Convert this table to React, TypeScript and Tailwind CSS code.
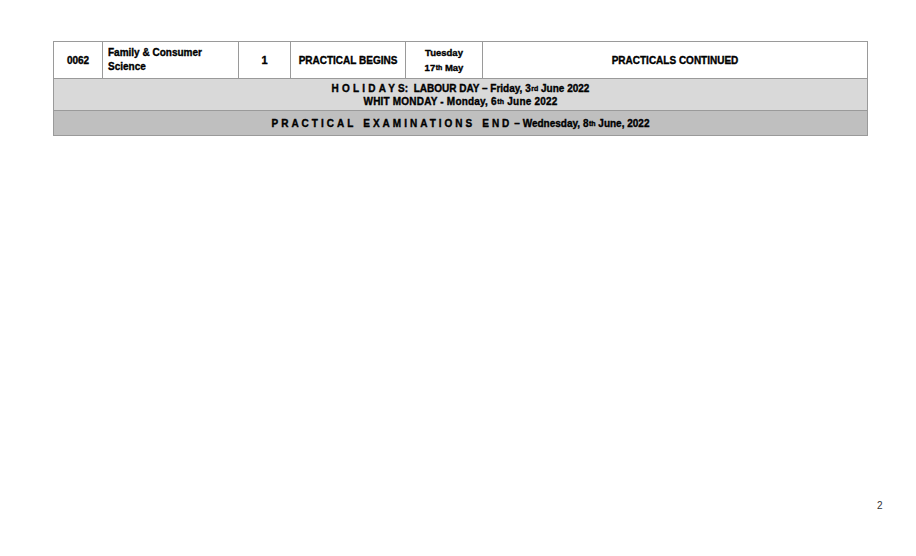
const font = { fontFamily: '"Liberation Sans", Arial, sans-serif' }

function Sup({ children }: { children: string }) {
  return <sup className="text-[7px] relative -top-[1px] ml-[0.5px]">{children}</sup>
}

export default function App() {
  return (
    <div className="w-[916px] h-[556px] bg-white relative text-black" style={font}>
      <div className="pt-[41px] pl-[53px]">
        <div className="w-[815px] border border-[#9a9a9a] font-bold text-[10px] [-webkit-text-stroke:0.35px_black]">
          {/* Row 1 */}
          <div className="flex h-[37px] border-b border-[#9a9a9a]">
            <div className="w-[49px] border-r border-[#9a9a9a] flex items-center justify-center">0062</div>
            <div className="w-[136px] border-r border-[#9a9a9a] flex items-center pl-[5px] leading-[14px]">
              Family &amp; Consumer
              <br />
              Science
            </div>
            <div className="w-[52px] border-r border-[#9a9a9a] flex items-center justify-center text-[11px]">1</div>
            <div className="w-[115px] border-r border-[#9a9a9a] flex items-center justify-center">PRACTICAL BEGINS</div>
            <div className="w-[77px] border-r border-[#9a9a9a] flex flex-col items-center justify-center leading-[15px] text-[9.5px]">
              <span>Tuesday</span>
              <span>
                17<Sup>th</Sup> May
              </span>
            </div>
            <div className="flex-1 flex items-center justify-center">PRACTICALS CONTINUED</div>
          </div>
          {/* Row 2 */}
          <div className="h-[32px] bg-[#d9d9d9] border-b border-[#9a9a9a] flex flex-col items-center justify-center leading-[13px]">
            <span>
              <span className="tracking-[3.2px]">HOLIDAY</span>S:&nbsp; LABOUR DAY – Friday, 3<Sup>rd</Sup> June 2022
            </span>
            <span className="tracking-[0.2px]">
              WHIT MONDAY - Monday, 6<Sup>th</Sup> June 2022
            </span>
          </div>
          {/* Row 3 */}
          <div className="h-[24px] bg-[#bfbfbf] flex items-center justify-center">
            <span className="tracking-[3px]">PRACTICAL</span>
            <span className="w-[7px]" />
            <span className="tracking-[3px]">EXAMINATIONS</span>
            <span className="w-[7px]" />
            <span className="tracking-[3px]">END</span>
            <span className="ml-[2px]">– Wednesday, 8<Sup>th</Sup> June, 2022</span>
          </div>
        </div>
      </div>
      <div className="absolute left-[877px] top-[498px] text-[10px] text-[#333]" style={{ fontFamily: '"Liberation Sans", sans-serif' }}>
        2
      </div>
    </div>
  )
}
